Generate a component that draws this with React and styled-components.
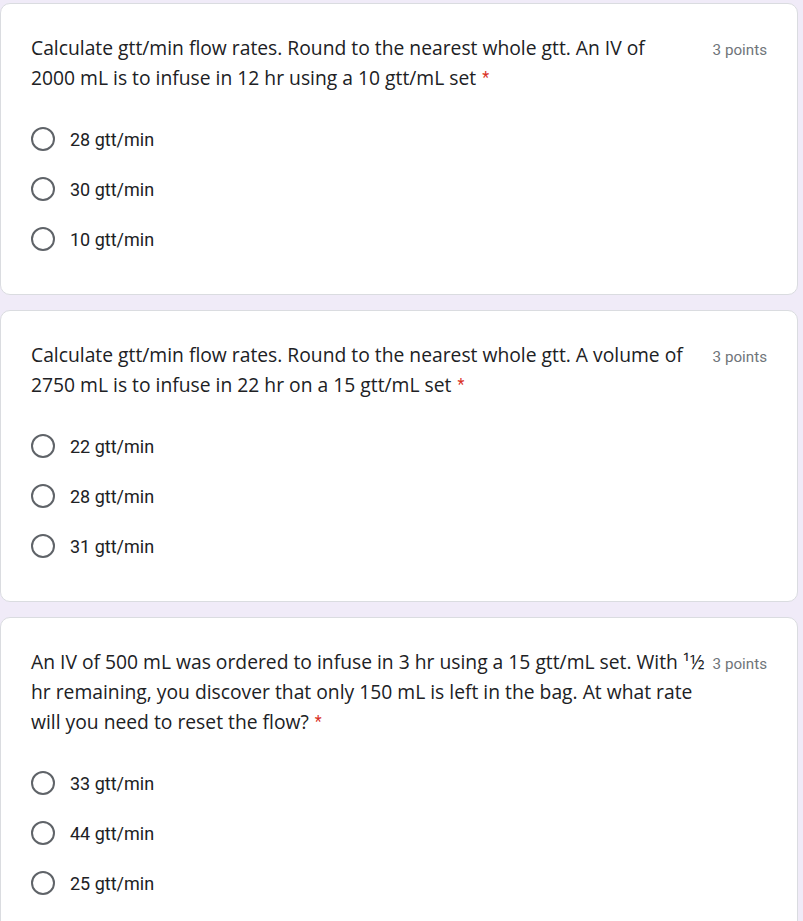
import React from "react";
import styled, { createGlobalStyle } from "styled-components";

const Global = createGlobalStyle`
  html, body { margin: 0; padding: 0; background: #f0ebf8; }
  body { -webkit-font-smoothing: antialiased; }
`;

const Page = styled.div`
  display: flex;
  flex-direction: column;
  gap: 15px;
  padding: 3px 5px 0 0;
  width: 803px;
  box-sizing: border-box;
`;

const Card = styled.section`
  background: #fff;
  border: 1px solid #dadce0;
  border-radius: 10px;
  padding: 29px 30px 30px 30px;
  display: flex;
  flex-direction: column;
  gap: 21px;
`;

const Header = styled.div`
  display: flex;
  align-items: flex-start;
  gap: 4px;
`;

const Title = styled.div`
  flex: 1;
  font-family: "Open Sans", Lato, sans-serif;
  font-size: 19.3px;
  line-height: 30px;
  color: #202124;
`;

const Required = styled.span`
  color: #d93025;
  font-family: Roboto, "Liberation Sans", sans-serif;
  font-size: 16px;
  vertical-align: 2px;
  margin-left: 1px;
`;

const Points = styled.div`
  padding-top: 2px;
  font-family: Roboto, "Liberation Sans", sans-serif;
  font-size: 15.2px;
  line-height: 30px;
  color: #70757a;
  white-space: nowrap;
`;

const Options = styled.div`
  display: flex;
  flex-direction: column;
`;

const Option = styled.label`
  display: flex;
  align-items: center;
  height: 50px;
`;

const Radio = styled.span`
  width: 24px;
  height: 24px;
  box-sizing: border-box;
  border: 2px solid #5f6368;
  border-radius: 50%;
  flex: none;
`;

const OptionText = styled.span`
  margin-left: 15px;
  font-family: Roboto, "Liberation Sans", sans-serif;
  font-size: 18px;
  color: #202124;
`;

const questions = [
  {
    title:
      "Calculate gtt/min flow rates. Round to the nearest whole gtt. An IV of 2000\u00a0mL is to infuse in 12 hr using a 10 gtt/mL set",
    options: ["28 gtt/min", "30 gtt/min", "10 gtt/min"],
  },
  {
    title:
      "Calculate gtt/min flow rates. Round to the nearest whole gtt. A volume of 2750\u00a0mL is to infuse in 22 hr on a 15 gtt/mL set",
    options: ["22 gtt/min", "28 gtt/min", "31 gtt/min"],
  },
  {
    title:
      "An IV of 500 mL was ordered to infuse in 3 hr using a 15 gtt/mL set. With ¹½ hr remaining, you discover that only 150 mL is left in the bag. At what rate will you need to reset the flow?",
    options: ["33 gtt/min", "44 gtt/min", "25 gtt/min"],
  },
];

export default function App() {
  return (
    <>
      <Global />
      <Page>
        {questions.map((q, i) => (
          <Card key={i}>
            <Header>
              <Title>
                {q.title} <Required>*</Required>
              </Title>
              <Points>3 points</Points>
            </Header>
            <Options>
              {q.options.map((o) => (
                <Option key={o}>
                  <Radio />
                  <OptionText>{o}</OptionText>
                </Option>
              ))}
            </Options>
          </Card>
        ))}
      </Page>
    </>
  );
}
